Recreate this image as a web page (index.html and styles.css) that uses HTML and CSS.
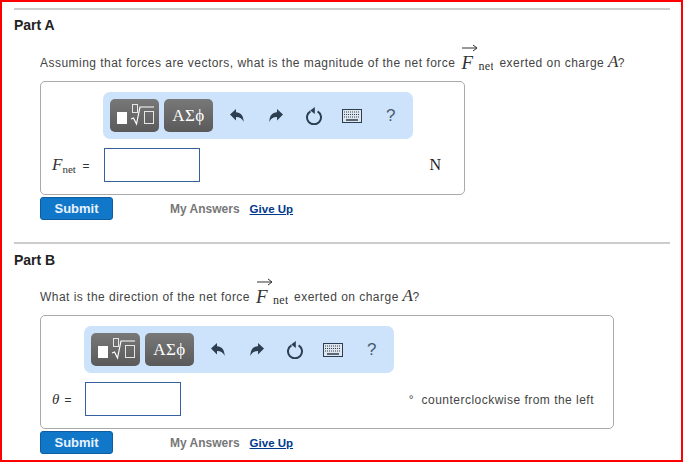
FILE: index.html
```html
<!DOCTYPE html>
<html lang="en">
<head>
    <meta charset="UTF-8">
    <title>Part A and Part B</title>
    <link rel="stylesheet" href="styles.css">
</head>
<body>
    <svg class="icon-defs" width="0" height="0">
        <defs>
            <symbol id="icon-templates" viewBox="0 0 49 33">
                <rect x="7" y="13" width="10" height="12" fill="#fff"/>
                <rect x="22.500" y="5.500" width="5" height="8" fill="none" stroke="#e6e6e6"/>
                <path d="M21 20l2.500-1 3 6 3.500-17h14" fill="none" stroke="#fff" stroke-width="1.200"/>
                <rect x="34.500" y="12.500" width="9" height="12" fill="none" stroke="#e6e6e6"/>
            </symbol>
            <symbol id="icon-undo" viewBox="0 0 16 16">
                <path d="M1 6.500 7 1v3.300c4.600.2 7.600 3 7.600 9.700-1.300-3.500-3.600-5-7.600-5v3.500z"/>
            </symbol>
            <symbol id="icon-redo" viewBox="0 0 16 16">
                <path d="M15 6.500 9 1v3.300C4.400 4.500 1.400 7.300 1.400 14c1.300-3.500 3.600-5 7.600-5v3.500z"/>
            </symbol>
            <symbol id="icon-reset" viewBox="0 0 18 18">
                <path d="M5.400 4.300a7 7 0 1 0 7.200 0" fill="none" stroke="currentColor" stroke-width="2"/>
                <path d="M9.800 0v7L5.200 3.500z"/>
            </symbol>
            <symbol id="icon-keys" viewBox="0 0 20 14">
                <rect x="0.500" y="0.500" width="19" height="13" fill="#dfe6ee" stroke="currentColor"/>
                <path d="M2 3h16M2 5.500h16M2 8h16" stroke="currentColor" stroke-dasharray="1 1" fill="none"/>
                <path d="M4 11h12" stroke="currentColor" stroke-width="1.500" fill="none"/>
            </symbol>
        </defs>
    </svg>

    <div class="page">
        <section class="part part-a">
            <h2>Part A</h2>
            <p class="question">
                Assuming that forces are vectors, what is the magnitude of the net force
                <span class="vector"><svg class="arrow" width="16" height="8" viewBox="0 0 16 8"><path d="M0 4h15M11 1l4 3-4 3" fill="none" stroke="#333"/></svg><i>F</i><span class="sub">net</span></span>
                <span>exerted on charge <i class="var">A</i>?</span>
            </p>
            <div class="answer-box">
                <div class="toolbar">
                    <button class="tool-btn"><svg class="templates"><use href="#icon-templates"/></svg></button>
                    <button class="tool-btn greek">ΑΣϕ</button>
                    <svg class="tool-icon undo"><use href="#icon-undo"/></svg>
                    <svg class="tool-icon redo"><use href="#icon-redo"/></svg>
                    <svg class="tool-icon reset"><use href="#icon-reset"/></svg>
                    <svg class="tool-icon keys"><use href="#icon-keys"/></svg>
                    <span class="help">?</span>
                </div>
                <div class="answer-row">
                    <span class="label"><i>F</i><span class="label-sub">net</span><span class="eq">=</span></span>
                    <input class="answer-input" type="text">
                    <span class="unit">N</span>
                </div>
            </div>
            <div class="actions">
                <button class="submit">Submit</button>
                <span class="my-answers">My Answers</span>
                <a class="give-up" href="#">Give Up</a>
            </div>
        </section>

        <section class="part part-b">
            <h2>Part B</h2>
            <p class="question">
                What is the direction of the net force
                <span class="vector"><svg class="arrow" width="16" height="8" viewBox="0 0 16 8"><path d="M0 4h15M11 1l4 3-4 3" fill="none" stroke="#333"/></svg><i>F</i><span class="sub">net</span></span>
                <span>exerted on charge <i class="var">A</i>?</span>
            </p>
            <div class="answer-box wide">
                <div class="toolbar">
                    <button class="tool-btn"><svg class="templates"><use href="#icon-templates"/></svg></button>
                    <button class="tool-btn greek">ΑΣϕ</button>
                    <svg class="tool-icon undo"><use href="#icon-undo"/></svg>
                    <svg class="tool-icon redo"><use href="#icon-redo"/></svg>
                    <svg class="tool-icon reset"><use href="#icon-reset"/></svg>
                    <svg class="tool-icon keys"><use href="#icon-keys"/></svg>
                    <span class="help">?</span>
                </div>
                <div class="answer-row">
                    <span class="label"><i>θ</i><span class="eq">=</span></span>
                    <input class="answer-input" type="text">
                    <span class="unit-text">° &nbsp;counterclockwise from the left</span>
                </div>
            </div>
            <div class="actions">
                <button class="submit">Submit</button>
                <span class="my-answers">My Answers</span>
                <a class="give-up" href="#">Give Up</a>
            </div>
        </section>
    </div>
</body>
</html>
```

FILE: styles.css
```css
body {
    margin: 0;
    font-family: "Liberation Sans", Arial, sans-serif;
    background-color: #fff;
}

.icon-defs {
    display: block;
    height: 0;
}

.page {
    width: 683px;
    height: 462px;
    box-sizing: border-box;
    border: 2px solid #f00;
    padding: 6px 11px 0 12px;
    overflow: hidden;
}

.part {
    border-top: 2px solid #ccc;
}

.part-b {
    margin-top: 22px;
}

h2 {
    margin: 0;
    font-size: 14px;
    line-height: 16px;
    font-weight: bold;
    color: #222;
}

.part-a h2 {
    margin-top: 7px;
}

.part-b h2 {
    margin-top: 8px;
}

.question {
    margin: 22px 0 0 26px;
    display: flex;
    align-items: flex-end;
    gap: 4px;
    font-size: 12px;
    line-height: 16px;
    color: #444;
    letter-spacing: 0.47px;
    white-space: nowrap;
}

.part-b .question {
    margin-top: 21px;
}

.vector {
    display: inline-flex;
    align-items: flex-end;
    position: relative;
    margin: 0 2px;
    font-family: "Liberation Serif", serif;
    font-size: 19px;
    line-height: 16px;
    color: #333;
}

.arrow {
    position: absolute;
    left: 1px;
    top: -11px;
}

.sub {
    width: 15px;
    margin-left: 5px;
    overflow: hidden;
    font-size: 12px;
    letter-spacing: 0.3px;
    line-height: 12px;
    position: relative;
    top: 1px;
}

.var {
    margin-right: -1px;
    font-family: "Liberation Serif", serif;
    font-size: 17px;
    line-height: 0;
    color: #333;
}

.answer-box {
    width: 425px;
    height: 114px;
    box-sizing: border-box;
    margin: 10px 0 0 26px;
    padding: 10px 0 0 0;
    border: 1px solid #aaa;
    border-radius: 5px;
}

.answer-box.wide {
    width: 574px;
}

.toolbar {
    width: 310px;
    height: 47px;
    box-sizing: border-box;
    margin-left: 62px;
    padding-left: 7px;
    display: flex;
    align-items: center;
    background-color: #cde3fc;
    border-radius: 7px;
    color: #2c3e50;
}

.wide .toolbar {
    margin-left: 43px;
}

.tool-btn {
    width: 49px;
    height: 33px;
    padding: 0;
    border: none;
    border-radius: 5px;
    background: linear-gradient(#787878, #5a5a5a);
    color: #fff;
}

.templates {
    display: block;
    width: 49px;
    height: 33px;
}

.greek {
    margin-left: 5px;
    font-family: "Liberation Serif", serif;
    font-size: 17px;
    letter-spacing: 0.5px;
}

.tool-icon {
    width: 16px;
    height: 16px;
    fill: currentColor;
}

.undo {
    margin-left: 16px;
}

.redo {
    margin-left: 23px;
}

.reset {
    width: 18px;
    height: 18px;
    margin-left: 21px;
}

.keys {
    width: 20px;
    height: 14px;
    margin-left: 19px;
}

.help {
    margin-left: 24px;
    font-size: 17px;
    color: #4a5a6a;
}

.answer-row {
    display: flex;
    align-items: center;
    margin-top: 9px;
    padding-left: 11px;
}

.label {
    display: flex;
    align-items: baseline;
    width: 52px;
    font-family: "Liberation Serif", serif;
    font-size: 17px;
    color: #333;
}

.wide .label {
    width: 33px;
    font-size: 15px;
}

.label-sub {
    position: relative;
    top: 3px;
    width: 14px;
    overflow: hidden;
    font-size: 11px;
}

.eq {
    margin-left: 6px;
    font-family: "Liberation Sans", sans-serif;
    font-size: 12px;
}

.wide .eq {
    margin-left: 5px;
}

.answer-input {
    width: 96px;
    height: 34px;
    box-sizing: border-box;
    padding: 0;
    border: 1px solid #35619f;
    outline: none;
}

.unit {
    margin-left: auto;
    margin-right: 23px;
    font-family: "Liberation Serif", serif;
    font-size: 16px;
    color: #222;
}

.unit-text {
    margin-left: auto;
    margin-right: 19px;
    margin-top: 2px;
    font-size: 12px;
    letter-spacing: 0.48px;
    color: #444;
}

.actions {
    display: flex;
    align-items: center;
    margin: 2px 0 0 26px;
}

.submit {
    width: 73px;
    height: 23px;
    padding: 0;
    border: 1px solid #0f5d9e;
    border-radius: 3px;
    background-color: #1177c8;
    color: #e8f3ff;
    font-family: "Liberation Sans", sans-serif;
    font-size: 13px;
    font-weight: bold;
}

.my-answers {
    margin-left: 57px;
    font-size: 12px;
    font-weight: bold;
    color: #777;
}

.give-up {
    margin-left: 10px;
    font-size: 11.5px;
    font-weight: bold;
    color: #003a8c;
}
```
